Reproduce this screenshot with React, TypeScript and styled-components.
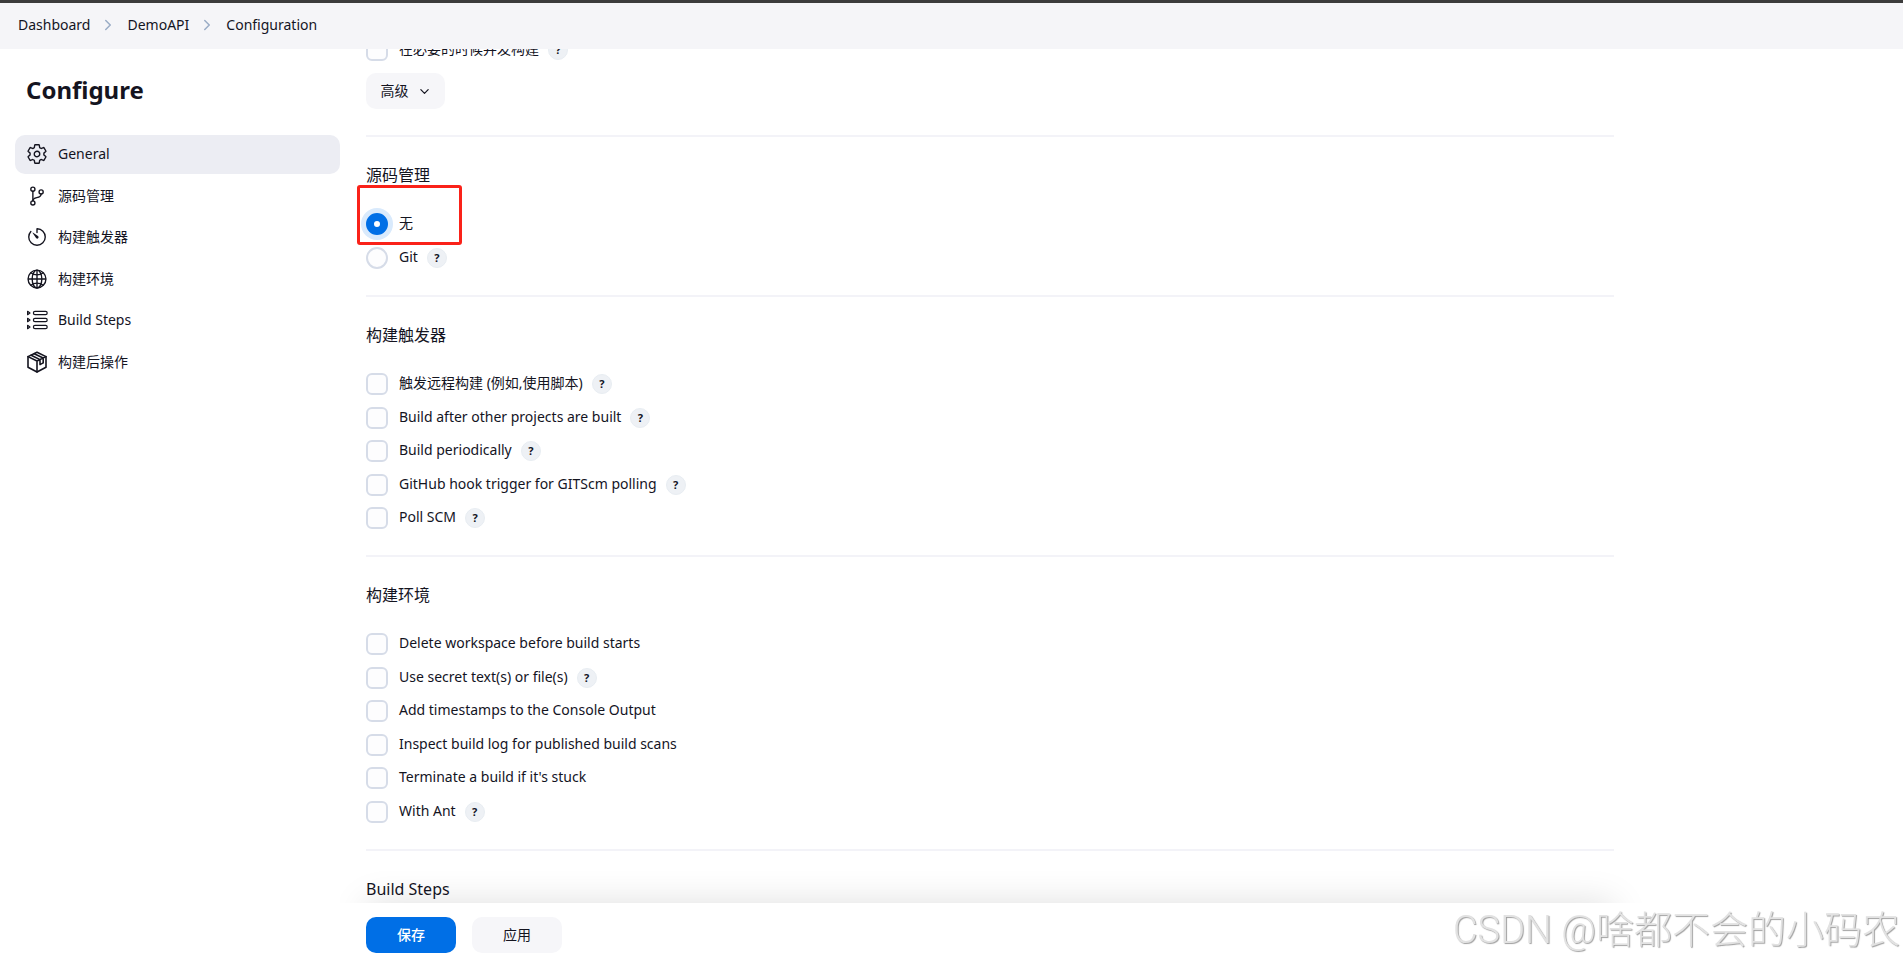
import React from 'react';
import styled, { createGlobalStyle, css } from 'styled-components';
import { IoSettingsOutline, IoGitBranchOutline, IoTimerOutline, IoGlobeOutline, IoChevronDown, IoChevronForward } from 'react-icons/io5';

const GlobalStyle = createGlobalStyle`
  *, *::before, *::after { box-sizing: border-box; }
  body {
    margin: 0;
    background: #fff;
    color: #14141f;
    font: 14px/22px 'Noto Sans', 'Noto Sans CJK SC', sans-serif;
  }
`;

const Shell = styled.div`
  display: flex;
  flex-direction: column;
  height: 100vh;
  overflow: hidden;
`;

const Header = styled.header`
  flex: none;
  height: 49px;
  padding: 0 18px;
  border-top: 3px solid #3c3c3c;
  background: #f5f5f8;
`;

const Crumbs = styled.ol`
  display: flex;
  align-items: center;
  gap: 11px;
  height: 43px;
  margin: 0;
  padding: 0;
  list-style: none;
`;

const Crumb = styled.li`
  display: flex;
  align-items: center;
  gap: 10px;

  a { color: inherit; text-decoration: none; }
  svg { color: #9aacc6; }
`;

const Body = styled.div`
  display: flex;
  flex: 1;
  min-height: 0;
`;

const Sidebar = styled.aside`
  flex: none;
  width: 340px;
  padding: 23px 0 0 15px;
`;

const PageTitle = styled.h1`
  margin: 0 0 27px;
  padding-left: 11px;
  font-size: 24px;
  line-height: 36px;
  font-weight: 700;
`;

const Tasks = styled.nav`
  display: flex;
  flex-direction: column;
  gap: 2px;

  & > :nth-child(even) { margin-top: 1px; }
`;

const Task = styled.a<{ $active?: boolean }>`
  display: flex;
  align-items: center;
  gap: 10px;
  height: 39px;
  padding: 0 11px 1px;
  border-radius: 10px;
  background: ${p => (p.$active ? '#ecedf3' : 'transparent')};
  color: inherit;
  text-decoration: none;

  svg { flex: none; width: 22px; height: 22px; }
`;

const Main = styled.main`
  display: flex;
  flex: 1;
  flex-direction: column;
  min-width: 0;
`;

const Form = styled.form`
  flex: 1;
  min-height: 0;
  padding: 0 26px;
  overflow: hidden;
`;

const Section = styled.section<{ $scrolled?: boolean }>`
  max-width: 1248px;
  padding-bottom: 26px;
  border-bottom: 2px solid #f3f3f8;
  ${p => p.$scrolled && css`margin-top: -10px;`}

  &:last-child { border-bottom: 0; }
`;

const SectionTitle = styled.h2`
  margin: 0;
  padding: 26px 0;
  font-size: 16px;
  line-height: 24px;
  font-weight: 400;
`;

const Options = styled.div<{ $roomy?: boolean }>`
  display: flex;
  flex-direction: column;
  gap: ${p => (p.$roomy ? 12 : 11)}px;

  ${p => !p.$roomy && css`
    & > :nth-child(even) { margin-top: 1px; }
  `}
`;

const Row = styled.div`
  display: flex;
  align-items: center;
  gap: 9px;
  height: 22px;
`;

const Label = styled.label`
  display: flex;
  align-items: center;
  gap: 11px;
`;

const LabelText = styled.span`
  padding-bottom: 2px;
  line-height: 20px;
`;

const Check = styled.input`
  flex: none;
  appearance: none;
  width: 22px;
  height: 22px;
  margin: 0;
  border: 2px solid #d6dce8;
  border-radius: 6px;
  background: #fdfdfe;
`;

const Radio = styled(Check)`
  border-radius: 50%;

  &:checked {
    border: 8px solid #006fe6;
    background: #fff;
    box-shadow: 0 0 0 5px #d9eafc;
  }
`;

const Help = styled.button`
  width: 20px;
  height: 20px;
  padding: 0;
  border: 1px solid #e8edf2;
  border-radius: 50%;
  background: #eef1f5;
  color: #14141f;
  font: 700 11px/18px 'Noto Sans', sans-serif;
`;

const Highlighted = styled.div`
  position: relative;

  &::after {
    content: '';
    position: absolute;
    top: -28px;
    left: -9px;
    width: 105px;
    height: 60px;
    border: 3px solid #fa2219;
    border-radius: 3px;
    pointer-events: none;
  }
`;

const Button = styled.button<{ $primary?: boolean; $compact?: boolean }>`
  display: inline-flex;
  align-items: center;
  justify-content: center;
  gap: 9px;
  min-width: ${p => (p.$compact ? 79 : 90)}px;
  height: 36px;
  padding: 0 14px;
  border: 0;
  border-radius: 10px;
  background: ${p => (p.$primary ? '#006fe6' : '#f6f6f9')};
  color: ${p => (p.$primary ? '#fff' : '#14141f')};
  font: inherit;
  font-weight: ${p => (p.$primary ? 500 : 400)};
`;

const Advanced = styled.div`
  display: flex;
  padding-top: 12px;
`;

const Footer = styled.footer`
  position: relative;
  display: flex;
  flex: none;
  gap: 16px;
  padding: 14px 26px 10px;
  background: #fff;
`;

const FooterShade = styled.div`
  position: absolute;
  right: 0;
  bottom: 100%;
  left: 0;
  height: 32px;
  overflow: hidden;
  pointer-events: none;

  &::after {
    content: '';
    display: block;
    max-width: 1248px;
    height: 60px;
    margin: 32px 26px 0;
    box-shadow: 0 0 36px rgba(0, 0, 0, 0.13);
  }
`;

const Watermark = styled.div`
  position: fixed;
  right: 3px;
  bottom: 5px;
  color: #e2e2e2;
  font: 300 38px/56px Roboto, 'Noto Sans CJK SC', sans-serif;
  text-shadow: 1px 1px 1px #a0a0a0;
  white-space: nowrap;
  pointer-events: none;
`;

function StepsIcon() {
  return (
    <svg viewBox="0 0 22 22" fill="none" stroke="currentColor" strokeWidth="1.2" strokeLinejoin="round">
      {[4, 11, 18].map(y => (
        <g key={y}>
          <path d={`M1.6 ${y - 1.7}v3.4L4 ${y}z`} />
          <rect x="7.4" y={y - 1.7} width="13.8" height="3.4" rx="1.6" />
        </g>
      ))}
    </svg>
  );
}

function PackageIcon() {
  return (
    <svg viewBox="0 0 22 22" fill="none" stroke="currentColor" strokeWidth="1.6" strokeLinejoin="round" strokeLinecap="round">
      <path d="M11 1.2 20 5.6v10.6L11 21 2 16.2V5.6z" />
      <path d="M2 5.6 11 10l9-4.4M11 10v11M5.2 4.2l8.8 4.4v5l3.2-1.7V7L8.2 2.7" />
    </svg>
  );
}

const tasks = [
  { name: 'General', icon: <IoSettingsOutline /> },
  { name: '源码管理', icon: <IoGitBranchOutline /> },
  { name: '构建触发器', icon: <IoTimerOutline /> },
  { name: '构建环境', icon: <IoGlobeOutline /> },
  { name: 'Build Steps', icon: <StepsIcon /> },
  { name: '构建后操作', icon: <PackageIcon /> },
];

type Option = { text: string; help?: boolean };

const triggers: Option[] = [
  { text: '触发远程构建 (例如,使用脚本)', help: true },
  { text: 'Build after other projects are built', help: true },
  { text: 'Build periodically', help: true },
  { text: 'GitHub hook trigger for GITScm polling', help: true },
  { text: 'Poll SCM', help: true },
];

const environment: Option[] = [
  { text: 'Delete workspace before build starts' },
  { text: 'Use secret text(s) or file(s)', help: true },
  { text: 'Add timestamps to the Console Output' },
  { text: 'Inspect build log for published build scans' },
  { text: "Terminate a build if it's stuck" },
  { text: 'With Ant', help: true },
];

function CheckRow({ text, help }: Option) {
  return (
    <Row>
      <Label><Check type="checkbox" /><LabelText>{text}</LabelText></Label>
      {help && <Help type="button">?</Help>}
    </Row>
  );
}

export default function App() {
  return (
    <Shell>
      <GlobalStyle />
      <Header>
        <Crumbs>
          <Crumb><a href="#dashboard">Dashboard</a><IoChevronForward size={16} /></Crumb>
          <Crumb><a href="#demoapi">DemoAPI</a><IoChevronForward size={16} /></Crumb>
          <Crumb><a href="#configuration">Configuration</a></Crumb>
        </Crumbs>
      </Header>
      <Body>
        <Sidebar>
          <PageTitle>Configure</PageTitle>
          <Tasks>
            {tasks.map((t, i) => (
              <Task key={t.name} href={`#section-${i}`} $active={i === 0}>{t.icon}{t.name}</Task>
            ))}
          </Tasks>
        </Sidebar>
        <Main>
          <Form>
            <Section $scrolled>
              <CheckRow text="在必要的时候并发构建" help />
              <Advanced>
                <Button type="button" $compact>高级<IoChevronDown size={13} /></Button>
              </Advanced>
            </Section>
            <Section>
              <SectionTitle>源码管理</SectionTitle>
              <Options $roomy>
                <Highlighted>
                  <Row><Label><Radio type="radio" name="scm" defaultChecked /><LabelText>无</LabelText></Label></Row>
                </Highlighted>
                <Row>
                  <Label><Radio type="radio" name="scm" /><LabelText>Git</LabelText></Label>
                  <Help type="button">?</Help>
                </Row>
              </Options>
            </Section>
            <Section>
              <SectionTitle>构建触发器</SectionTitle>
              <Options>{triggers.map(o => <CheckRow key={o.text} {...o} />)}</Options>
            </Section>
            <Section>
              <SectionTitle>构建环境</SectionTitle>
              <Options>{environment.map(o => <CheckRow key={o.text} {...o} />)}</Options>
            </Section>
            <Section>
              <SectionTitle>Build Steps</SectionTitle>
            </Section>
          </Form>
          <Footer>
            <FooterShade />
            <Button type="submit" $primary>保存</Button>
            <Button type="button">应用</Button>
          </Footer>
        </Main>
      </Body>
      <Watermark>CSDN @啥都不会的小码农</Watermark>
    </Shell>
  );
}
